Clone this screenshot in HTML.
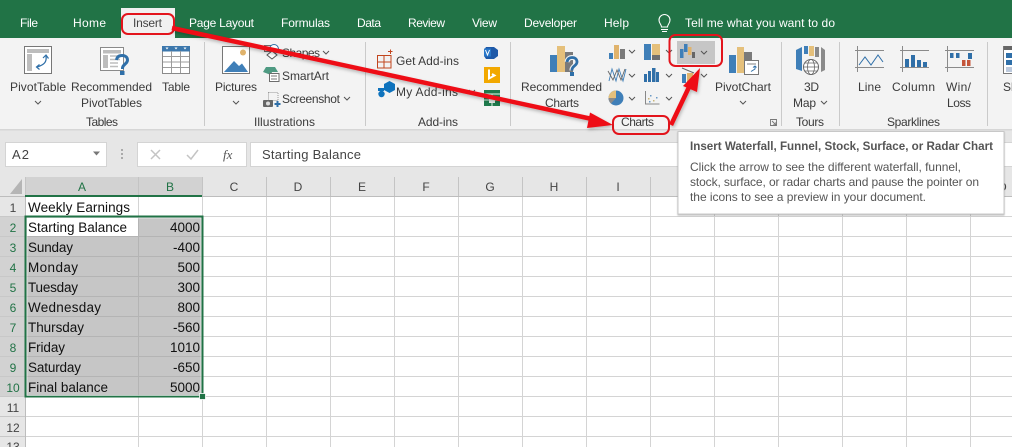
<!DOCTYPE html>
<html><head><meta charset="utf-8"><style>
html,body{margin:0;padding:0;background:#fff;width:1012px;height:447px;overflow:hidden}
svg{display:block;font-family:"Liberation Sans",sans-serif}
.t{font-size:12px;fill:#fff}
.r{font-size:12px;fill:#3a3a3a}
.c{font-size:13.5px;fill:#111}
.h{font-size:12px;fill:#444;text-anchor:middle}
.g{font-size:12px;fill:#217346;text-anchor:middle}
.m{text-anchor:middle}
.e{text-anchor:end}
.ch{fill:none;stroke:#555;stroke-width:1}
.tip{font-size:12px;fill:#555}
</style></head><body>
<svg width="1012" height="447" viewBox="0 0 1012 447" xmlns="http://www.w3.org/2000/svg">
<defs>
<filter id="sh" x="-3%" y="-5%" width="106%" height="115%"><feDropShadow dx="0" dy="1" stdDeviation=".8" flood-color="#000" flood-opacity=".28"/></filter>
<filter id="as" x="-5%" y="-20%" width="110%" height="140%"><feDropShadow dx="1" dy="2" stdDeviation="1.5" flood-color="#000" flood-opacity=".25"/></filter>
<path id="cv" d="M0 0l3 3 3-3" fill="none" stroke="#555" stroke-width="1"/>
</defs>

<!-- base -->
<rect width="1012" height="447" fill="#fff"/>
<rect width="1012" height="38" fill="#217346"/>
<rect y="38" width="1012" height="92" fill="#f3f3f3"/>
<rect y="130" width="1012" height="67" fill="#e6e6e6"/>
<rect y="129" width="1012" height="1.5" fill="#d6d6d6"/>

<!-- tabs -->
<rect x="121" y="8" width="54" height="30" fill="#f0f0f0"/>
<text class="t" x="20" y="27" textLength="18">File</text>
<text class="t" x="73" y="27" textLength="33">Home</text>
<text class="t" x="133" y="27" textLength="29" style="fill:#444">Insert</text>
<text class="t" x="189" y="27" textLength="65">Page Layout</text>
<text class="t" x="281" y="27" textLength="49">Formulas</text>
<text class="t" x="357" y="27" textLength="24">Data</text>
<text class="t" x="408" y="27" textLength="37">Review</text>
<text class="t" x="472" y="27" textLength="25">View</text>
<text class="t" x="524" y="27" textLength="53">Developer</text>
<text class="t" x="604" y="27" textLength="25">Help</text>
<text class="t" x="685" y="27" textLength="150">Tell me what you want to do</text>
<!-- bulb -->
<path d="M661 29.500h7M662 31.500h5M661.500 27c0-2.500-2.500-3.500-2.500-7a5.500 5.500 0 0 1 11 0c0 3.500-2.500 4.500-2.500 7z" fill="none" stroke="#fff" stroke-width="1.100"/>

<!-- separators -->
<g stroke="#cacaca" stroke-width="1">
<path d="M204.500 42v84M365.500 42v84M510.500 42v84M781.500 42v84M839.500 42v84M987.500 42v84"/>
</g>

<!-- PivotTable icon -->
<rect x="24.500" y="46.500" width="27" height="27" fill="#fff" stroke="#777"/>
<rect x="27" y="49" width="22" height="4" fill="#bdbdbd"/>
<rect x="27" y="54" width="5" height="17" fill="#bdbdbd"/>
<path d="M46 56c1 6-2 9-9 11" fill="none" stroke="#2f6fa8" stroke-width="1.300"/>
<path d="M43 58l3-3 2.500 3.500M39.500 64.500l-3 2.500 3 2.500" fill="none" stroke="#2f6fa8" stroke-width="1.200"/>

<!-- Recommended PivotTables icon -->
<rect x="100.500" y="47.500" width="23" height="23" fill="#fff" stroke="#8a8a8a"/>
<rect x="103" y="50" width="18" height="3.500" fill="#bdbdbd"/>
<rect x="103" y="55" width="5" height="13" fill="#bdbdbd"/>
<path d="M110 56h10M110 59.500h10M110 63h8M110 66.500h8" stroke="#bdbdbd" stroke-width="1.500"/>
<path d="M116.500 60c.5-3 2.500-4.500 5.500-4.500 3.500 0 5.500 2 5.500 4.500 0 4-4.500 4-5 8v1" fill="none" stroke="#2f6fa8" stroke-width="3"/>
<rect x="120" y="71" width="4.500" height="4" fill="#2f6fa8"/>

<!-- Table icon -->
<rect x="162.500" y="46.500" width="27" height="27" fill="#fff" stroke="#8a8a8a"/>
<rect x="162" y="46" width="28" height="5.500" fill="#3d78ad"/>
<path d="M171.500 51v22M180.500 51v22M163 56.500h26M163 62h26M163 67.500h26" stroke="#9c9c9c" stroke-width="1" fill="none"/>
<path d="M165.500 47.500h3l-1.500 2zM174.500 47.500h3l-1.500 2zM183.500 47.500h3l-1.500 2z" fill="#fff"/>

<!-- Pictures -->
<rect x="222.500" y="46.500" width="27" height="27" fill="#fff" stroke="#777"/>
<circle cx="243" cy="52.500" r="3" fill="#e0b36c"/>
<path d="M224 72l10-11 5 5 3-2.500 6 8.500z" fill="#3f7fb8"/>

<!-- Shapes/SmartArt/Screenshot -->
<path d="M264.500 45.500h6v6h-6z" fill="#fff" stroke="#6d6d6d" stroke-width="1"/>
<circle cx="274" cy="49" r="4.500" fill="#fff" stroke="#2f6fa8" stroke-width="1"/>
<path d="M272 51l5 4-5 4-5-4z" fill="#fff" stroke="#555" stroke-width="1"/>
<text class="r" x="282" y="57" textLength="38">Shapes</text>
<use href="#cv" x="323" y="51"/>
<path d="M263 72l3-5h9l3 5h-6l-1 3z" fill="#4e9a82"/>
<rect x="269.500" y="73.500" width="9.500" height="8" fill="#fff" stroke="#6d6d6d"/>
<path d="M271 76h6M271 79h6" stroke="#777"/>
<text class="r" x="282" y="80" textLength="47">SmartArt</text>
<rect x="268.500" y="92.500" width="9.500" height="8" fill="none" stroke="#9a9a9a" stroke-dasharray="1 1"/>
<rect x="263" y="100" width="10" height="7" rx="1" fill="#666"/>
<circle cx="268" cy="103.500" r="2" fill="#ddd"/>
<path d="M277.500 101v6M274.500 104h6" stroke="#2f6fa8" stroke-width="2"/>
<text class="r" x="282" y="103" textLength="58">Screenshot</text>
<use href="#cv" x="344" y="97"/>

<!-- Add-ins -->
<g fill="none" stroke="#c2461e" stroke-width="1">
<rect x="377.500" y="55.500" width="6.500" height="6.500"/><rect x="384" y="55.500" width="7" height="6.500"/><rect x="377.500" y="62" width="6.500" height="6"/><rect x="384" y="62" width="7" height="6"/>
<path d="M388 51.500h4.500M390.500 49.500v4.500"/>
</g>
<text class="r" x="396" y="65" textLength="63">Get Add-ins</text>
<path d="M384 84l5.500-3 5.500 3v6l-5.500 3-5.500-3z" fill="#0f73bd"/>
<circle cx="381.500" cy="94" r="3.200" fill="#0f73bd"/><rect x="378" y="88" width="6" height="3" fill="#0f73bd"/>
<text class="r" x="396" y="96" textLength="62">My Add-ins</text>
<use href="#cv" x="469" y="90"/>

<path d="M486 47h8l4 3v6l-4 3h-8l-2-3v-6z" fill="#1e59a8"/>
<rect x="484" y="48.500" width="7" height="8" fill="#2877c9"/>
<path d="M485.500 50l2 5 2-5" stroke="#fff" fill="none" stroke-width="1"/>
<rect x="484" y="67" width="16" height="16" fill="#f2a800"/>
<path d="M489 69.500v9l5.500-3-2.500-1.500" fill="none" stroke="#fff" stroke-width="2"/>
<rect x="484" y="90" width="16" height="16" fill="#1e7a4c"/>
<path d="M484 94h16M492 94v12M484 100h16" stroke="#bfe0cc" stroke-width="1.200"/>
<rect x="489" y="97" width="6" height="6" fill="#e6efe9"/>

<!-- Recommended Charts -->
<rect x="550" y="55" width="7" height="17" fill="#3f7fb8"/>
<rect x="557" y="46" width="8" height="26" fill="#e5c07b"/>
<rect x="565" y="52" width="8" height="20" fill="#7a7a7a"/>
<path d="M567 62c.5-3 2.500-4.500 5-4.500 3.500 0 5 2 5 4.500 0 3.500-4.500 4-5 7.500v1" fill="none" stroke="#f3f3f3" stroke-width="5"/>
<path d="M567 62c.5-3 2.500-4.500 5-4.500 3.500 0 5 2 5 4.500 0 3.500-4.500 4-5 7.500v1" fill="none" stroke="#2f6fa8" stroke-width="2.800"/>
<rect x="570" y="72" width="4" height="4" fill="#2f6fa8"/>

<!-- chart grid icons -->
<rect x="609" y="53" width="4" height="6" fill="#3f7fb8"/><rect x="614" y="45" width="5" height="14" fill="#e0b36c"/><rect x="620" y="49" width="5" height="10" fill="#7a7a7a"/>
<use href="#cv" x="629" y="50"/>
<rect x="644" y="44" width="7" height="16" fill="#3f7fb8"/><rect x="652" y="44" width="8" height="11" fill="#e5c07b"/><rect x="652" y="55" width="8" height="5" fill="#707070"/>
<use href="#cv" x="666" y="50"/>
<path d="M609 81l3-12 4 12 3-12 4 12 3-12" fill="none" stroke="#3f7fb8" stroke-width=".9"/>
<path d="M608 71l5 9 4-10 4 10 4-11" fill="none" stroke="#666" stroke-width=".9"/>
<use href="#cv" x="629" y="74"/>
<rect x="644" y="74" width="3" height="8" fill="#2f6fa8"/><rect x="648" y="71" width="3" height="11" fill="#2f6fa8"/><rect x="652" y="68" width="3.500" height="14" fill="#2f6fa8"/><rect x="656" y="72" width="3" height="10" fill="#2f6fa8"/>
<use href="#cv" x="666" y="74"/>
<circle cx="616" cy="98" r="7.500" fill="#3f7fb8"/>
<path d="M616 98v-7.500a7.500 7.500 0 0 0-7.500 7.500z" fill="#e5c07b"/>
<path d="M616 98h-7.500a7.500 7.500 0 0 0 2.500 5.500z" fill="#8a8a8a"/>
<use href="#cv" x="629" y="97"/>
<path d="M645.500 91v13h14" fill="none" stroke="#888"/>
<g fill="#c9b57a"><rect x="648" y="98" width="1.500" height="1.500"/><rect x="653" y="100" width="1.500" height="1.500"/></g>
<g fill="#6a9ac6"><rect x="650" y="95" width="1.500" height="1.500"/><rect x="656" y="97" width="1.500" height="1.500"/><rect x="649" y="101" width="1.500" height="1.500"/></g>
<use href="#cv" x="666" y="97"/>

<!-- waterfall button -->
<rect x="677" y="41" width="38" height="23" fill="#c6c6c6"/>
<rect x="680" y="49" width="3.500" height="9" fill="#3f7fb8"/><rect x="684" y="44" width="3.500" height="8" fill="#3f7fb8"/>
<rect x="688" y="47" width="3.500" height="8" fill="#e0b36c"/><rect x="692" y="52" width="3" height="6" fill="#666"/>
<use href="#cv" x="701" y="51"/>
<!-- combo icon under -->
<rect x="682" y="74" width="4" height="9" fill="#3f7fb8"/><rect x="687" y="73" width="6" height="10" fill="#e0b36c"/>
<path d="M682 68l12 5" stroke="#666" stroke-width="1" fill="none"/>
<use href="#cv" x="701" y="74"/>

<!-- PivotChart -->
<rect x="729" y="55" width="7" height="18" fill="#3f7fb8"/>
<rect x="737" y="47" width="7" height="26" fill="#e5c07b"/>
<rect x="744" y="52" width="8" height="11" fill="#7a7a7a"/>
<rect x="744.500" y="60.500" width="14" height="14" fill="#fff" stroke="#777"/>
<path d="M747 64h9" stroke="#aaa" stroke-width="1.500"/>
<path d="M755 66v3l-4 2.500M753 67.500l2-1.500 1.500 1.500" fill="none" stroke="#2f6fa8"/>

<!-- 3D map -->
<path d="M796 50l6-3v24l-6-2z" fill="#3f7fb8"/>
<path d="M804 46h4v8h-4z" fill="#3f7fb8"/>
<path d="M809 46h5v10h-5z" fill="#e5c07b"/>
<path d="M815 47h4v10h-4z" fill="#8a8a8a"/>
<path d="M821 47l4 3v20l-4 2z" fill="#8a8a8a"/>
<circle cx="811" cy="67" r="7.500" fill="#fff" stroke="#666"/>
<ellipse cx="811" cy="67" rx="3.500" ry="7.500" fill="none" stroke="#666" stroke-width=".8"/>
<path d="M803.500 67h15M805 63h12M805 71h12" stroke="#666" stroke-width=".8"/>

<!-- Sparkline icons -->
<g stroke="#8a8a8a" fill="none">
<path d="M855 50.500h29M855 67.500h29M857.500 46v26"/>
<path d="M900 50.500h29M900 67.500h29M902.500 46v26"/>
<path d="M945 50.500h29M945 67.500h29M947.500 46v26"/>
</g>
<path d="M859 65l6-8 6 8 7-10 5 7" fill="none" stroke="#2f6fa8" stroke-width="1"/>
<rect x="905" y="59" width="4" height="8" fill="#2f6fa8"/><rect x="911" y="55" width="4" height="12" fill="#2f6fa8"/><rect x="917" y="60" width="4" height="7" fill="#2f6fa8"/><rect x="923" y="62" width="4" height="5" fill="#2f6fa8"/>
<rect x="950" y="53" width="3.500" height="5" fill="#2f6fa8"/><rect x="956" y="53" width="3.500" height="5" fill="#2f6fa8"/><rect x="962" y="60" width="3.500" height="6" fill="#c4553a"/><rect x="967" y="60" width="3.500" height="6" fill="#c4553a"/><rect x="968" y="53" width="4" height="6" fill="#2f6fa8"/>

<!-- Slicer icon -->
<rect x="1003.500" y="46.500" width="12" height="27" fill="#fff" stroke="#777"/>
<rect x="1004" y="46" width="12" height="4" fill="#666"/>
<rect x="1006" y="53" width="10" height="5" fill="#2f6fa8"/><rect x="1006" y="60" width="10" height="5" fill="#2f6fa8"/><rect x="1006" y="67" width="10" height="5" fill="#bcc9dc"/>

<!-- ribbon labels -->
<text class="r" x="10" y="91" textLength="56">PivotTable</text>
<use href="#cv" x="35" y="101"/>
<text class="r" x="71" y="91" textLength="81">Recommended</text>
<text class="r" x="81" y="107" textLength="61">PivotTables</text>
<text class="r" x="162" y="91" textLength="28">Table</text>
<text class="r" x="215" y="91" textLength="42">Pictures</text>
<use href="#cv" x="233" y="101"/>
<text class="r" x="521" y="91" textLength="81">Recommended</text>
<text class="r" x="545" y="107" textLength="34">Charts</text>
<text class="r" x="715" y="91" textLength="56">PivotChart</text>
<use href="#cv" x="740" y="101"/>
<text class="r" x="804" y="91" textLength="15">3D</text>
<text class="r" x="793" y="107" textLength="23">Map</text>
<use href="#cv" x="821" y="101"/>
<text class="r" x="858" y="91" textLength="23">Line</text>
<text class="r" x="892" y="91" textLength="43">Column</text>
<text class="r" x="946" y="91" textLength="25">Win/</text>
<text class="r" x="947" y="107" textLength="24">Loss</text>
<text class="r" x="1003" y="91">Sli</text>

<text class="r" x="86" y="126" textLength="32">Tables</text>
<text class="r" x="254" y="126" textLength="61">Illustrations</text>
<text class="r" x="418" y="126" textLength="40">Add-ins</text>
<text class="r" x="621" y="126" textLength="33">Charts</text>
<text class="r" x="796" y="126" textLength="28">Tours</text>
<text class="r" x="887" y="126" textLength="53">Sparklines</text>
<path d="M770.500 119.500h6v6h-6z M772 121l4 4M776 122v3h-3" fill="none" stroke="#777" stroke-width=".9"/>

<!-- formula bar -->
<rect x="5.500" y="142.500" width="101" height="24" fill="#fff" stroke="#d4d4d4"/>
<text x="12" y="159" style="font-size:13px;fill:#444" textLength="17">A2</text>
<path d="M93 151.500h7l-3.500 4z" fill="#777"/>
<g fill="#aaa"><rect x="121" y="149" width="2" height="2"/><rect x="121" y="153" width="2" height="2"/><rect x="121" y="157" width="2" height="2"/></g>
<rect x="137.500" y="142.500" width="109" height="24" fill="#fff" stroke="#d4d4d4"/>
<path d="M151 150l9 9M160 150l-9 9" stroke="#c4c4c4" stroke-width="1.500"/>
<path d="M187 155l4 4 7-9" fill="none" stroke="#c4c4c4" stroke-width="1.500"/>
<text x="223" y="159" style="font-size:13px;font-family:'Liberation Serif',serif;font-style:italic;fill:#555">fx</text>
<rect x="250.500" y="142.500" width="770" height="24" fill="#fff" stroke="#d4d4d4"/>
<text x="262" y="159" style="font-size:13px;fill:#444" textLength="99">Starting Balance</text>

<!-- col headers -->
<rect x="0" y="177" width="1012" height="20" fill="#e6e6e6"/>
<rect x="25" y="177" width="177" height="20" fill="#d2d2d2"/>
<path d="M22 179v15H10z" fill="#b5b5b5"/>
<g stroke="#c4c4c4"><path d="M25.500 177v20M138.500 177v20M202.500 177v20M266.500 177v20M330.500 177v20M394.500 177v20M458.500 177v20M522.500 177v20M586.500 177v20M650.500 177v20M714.500 177v20M778.500 177v20M842.500 177v20M906.500 177v20M970.500 177v20"/></g>
<rect x="0" y="196" width="1012" height="1" fill="#bdbdbd"/>
<rect x="25" y="195" width="177" height="2" fill="#217346"/>
<text class="g" x="82" y="191">A</text><text class="g" x="170" y="191">B</text>
<text class="h" x="234" y="191">C</text><text class="h" x="298" y="191">D</text><text class="h" x="362" y="191">E</text><text class="h" x="426" y="191">F</text><text class="h" x="490" y="191">G</text><text class="h" x="554" y="191">H</text><text class="h" x="618" y="191">I</text><text class="h" x="682" y="191">J</text><text class="h" x="746" y="191">K</text><text class="h" x="810" y="191">L</text><text class="h" x="874" y="191">M</text><text class="h" x="938" y="191">N</text><text class="h" x="1002" y="191">O</text>

<!-- row headers -->
<rect x="0" y="197" width="25" height="250" fill="#e6e6e6"/>
<rect x="0" y="217" width="25" height="180" fill="#d2d2d2"/>
<path d="M25.500 197v250" stroke="#bdbdbd"/>
<g stroke="#c8c8c8"><path d="M0 216.500h25M0 236.500h25M0 256.500h25M0 276.500h25M0 296.500h25M0 316.500h25M0 336.500h25M0 356.500h25M0 376.500h25M0 396.500h25M0 416.500h25M0 436.500h25"/></g>
<text class="h" x="13" y="212">1</text>
<text class="g" x="13" y="232">2</text><text class="g" x="13" y="252">3</text><text class="g" x="13" y="272">4</text><text class="g" x="13" y="292">5</text><text class="g" x="13" y="312">6</text><text class="g" x="13" y="332">7</text><text class="g" x="13" y="352">8</text><text class="g" x="13" y="372">9</text><text class="g" x="13" y="392">10</text>
<text class="h" x="13" y="412">11</text><text class="h" x="13" y="432">12</text><text class="h" x="13" y="451">13</text>

<!-- grid -->
<g stroke="#d4d4d4">
<path d="M26 216.500h986M26 236.500h986M26 256.500h986M26 276.500h986M26 296.500h986M26 316.500h986M26 336.500h986M26 356.500h986M26 376.500h986M26 396.500h986M26 416.500h986M26 436.500h986"/>
<path d="M138.500 197v250M202.500 197v250M266.500 197v250M330.500 197v250M394.500 197v250M458.500 197v250M522.500 197v250M586.500 197v250M650.500 197v250M714.500 197v250M778.500 197v250M842.500 197v250M906.500 197v250M970.500 197v250"/>
</g>
<!-- selection -->
<rect x="26" y="217" width="176" height="180" fill="#c6c6c6"/>
<g stroke="#b4b4b4"><path d="M26 236.500h176M26 256.500h176M26 276.500h176M26 296.500h176M26 316.500h176M26 336.500h176M26 356.500h176M26 376.500h176M138.500 217v180"/></g>
<rect x="27" y="218" width="111" height="18" fill="#fff"/>
<rect x="25.500" y="216.500" width="177" height="180" fill="none" stroke="#217346" stroke-width="2"/>
<rect x="27" y="218" width="174" height="177.500" fill="none" stroke="#fff" stroke-width=".6" opacity=".8"/>
<rect x="199.500" y="393.500" width="6" height="6" fill="#217346" stroke="#fff" stroke-width=".8"/>

<!-- cells -->
<text class="c" x="28" y="212" textLength="102">Weekly Earnings</text>
<text class="c" x="28" y="232" textLength="99">Starting Balance</text>
<text class="c" x="28" y="252" textLength="45">Sunday</text>
<text class="c" x="28" y="272" textLength="50">Monday</text>
<text class="c" x="28" y="292" textLength="50">Tuesday</text>
<text class="c" x="28" y="312" textLength="73">Wednesday</text>
<text class="c" x="28" y="332" textLength="56">Thursday</text>
<text class="c" x="28" y="352" textLength="37">Friday</text>
<text class="c" x="28" y="372" textLength="53">Saturday</text>
<text class="c" x="28" y="392" textLength="80">Final balance</text>
<text class="c e" x="200" y="232">4000</text>
<text class="c e" x="200" y="252">-400</text>
<text class="c e" x="200" y="272">500</text>
<text class="c e" x="200" y="292">300</text>
<text class="c e" x="200" y="312">800</text>
<text class="c e" x="200" y="332">-560</text>
<text class="c e" x="200" y="352">1010</text>
<text class="c e" x="200" y="372">-650</text>
<text class="c e" x="200" y="392">5000</text>

<!-- tooltip -->
<rect x="678" y="131.500" width="326" height="82.500" fill="#fff" stroke="#c8c8c8" filter="url(#sh)"/>
<text x="690" y="150" style="font-size:12px;font-weight:bold;fill:#555" textLength="303" lengthAdjust="spacingAndGlyphs">Insert Waterfall, Funnel, Stock, Surface, or Radar Chart</text>
<text class="tip" x="690" y="171" textLength="271">Click the arrow to see the different waterfall, funnel,</text>
<text class="tip" x="690" y="186" textLength="289">stock, surface, or radar charts and pause the pointer on</text>
<text class="tip" x="690" y="201" textLength="236">the icons to see a preview in your document.</text>

<!-- red highlights & arrows -->
<g fill="none" stroke="#e3141c" stroke-width="2">
<rect x="122" y="14" width="52" height="20" rx="6"/>
<rect x="613" y="116" width="56" height="18" rx="6"/>
<rect x="669.500" y="35" width="52.500" height="31" rx="6"/>
</g>
<g filter="url(#as)">
<path d="M172 28L592 119" stroke="#ee0d16" stroke-width="4.500" fill="none"/>
<path d="M613 125L590 112.500L587 128z" fill="#ee0d16"/>
<path d="M671 125L690 85" stroke="#ee0d16" stroke-width="4.500" fill="none"/>
<path d="M700 68L683 86L697 92z" fill="#ee0d16"/>
</g>
</svg>
</body></html>
